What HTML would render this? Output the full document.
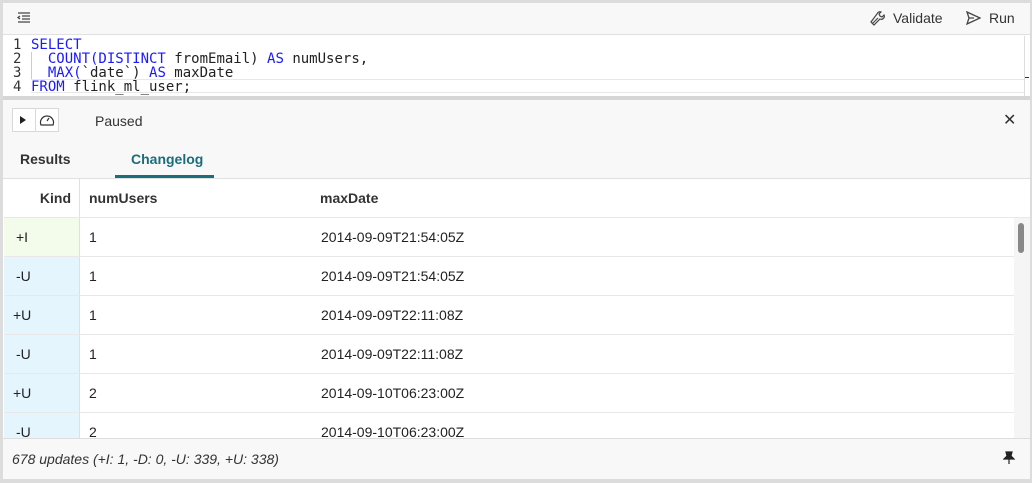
<!DOCTYPE html>
<html><head><style>
*{box-sizing:border-box;margin:0;padding:0}
body{width:1032px;height:483px;background:#fff;font-family:"Liberation Sans",Roboto,sans-serif;position:relative;overflow:hidden;color:#222}
.abs{position:absolute}
.mono{font-family:"DejaVu Sans Mono","Liberation Mono",monospace;font-size:14px;line-height:14px}
.kw{color:#1a1aff}
.row{position:absolute;left:4px;width:1010px;height:39px;border-bottom:1px solid #e8e8e8;font-size:14px}
.row .k{position:absolute;left:0;top:0;width:76px;height:38px;background:#e4f5fd;border-right:1px solid #e0e0e0;padding:11px 0 0 10px}
.row .n{position:absolute;left:85px;top:11px}
.row .d{position:absolute;left:317px;top:11px}
</style></head><body>
<div class="abs" style="left:0;top:0;width:1032px;height:483px;border:3px solid #dcdcdc;border-right:2px solid #dcdcdc;border-bottom:4px solid #dcdcdc"></div>
<div class="abs" style="left:3px;top:3px;width:1027px;height:32px;background:#f8f8f8;border-bottom:1px solid #e0e0e0"></div>
<svg class="abs" style="left:17px;top:12px" width="14" height="12" viewBox="0 0 14 12"><path d="M1 1h12M5 4h8M5 7h8M1 10h12M3 4l-2 1.5 2 1.5" stroke="#444" stroke-width="1.3" fill="none"/></svg>
<svg class="abs" style="left:870px;top:10px" width="16" height="16" viewBox="0 0 16 16"><path d="M2 14l6-6M7 4a3 3 0 0 1 4-2l-2 2 1 2 2 1 2-2a3 3 0 0 1-4 4L4 15 1 12z" stroke="#444" stroke-width="1.2" fill="none"/></svg>
<div class="abs" style="left:893px;top:10px;font-size:14px;color:#333">Validate</div>
<svg class="abs" style="left:966px;top:11px" width="15" height="14" viewBox="0 0 15 14"><path d="M1 1l13 6-13 6 2-6z M3 7h5" stroke="#444" stroke-width="1.3" fill="none"/></svg>
<div class="abs" style="left:989px;top:10px;font-size:14px;color:#333">Run</div>
<div class="abs mono" style="left:13px;top:38px;color:#333">1<br>2<br>3<br>4</div>
<div class="abs" style="left:31px;top:52px;width:1px;height:28px;background:#ccc"></div>
<div class="abs" style="left:31px;top:79px;width:994px;height:14px;border-top:1px solid #e8e8e8;border-bottom:1px solid #e8e8e8"></div>
<div class="abs mono" style="left:31px;top:38px;white-space:pre;color:#222"><span class="kw">SELECT</span>
  <span class="kw">COUNT(DISTINCT</span> fromEmail) <span class="kw">AS</span> numUsers,
  <span class="kw">MAX(</span>`date`) <span class="kw">AS</span> maxDate
<span class="kw">FROM</span> flink_ml_user;</div>
<div class="abs" style="left:1024px;top:36px;width:1px;height:60px;background:#ddd"></div>
<div class="abs" style="left:1025px;top:77px;width:4px;height:1px;background:#333"></div>
<div class="abs" style="left:3px;top:96px;width:1027px;height:4px;background:#d6d6d6"></div>
<div class="abs" style="left:3px;top:100px;width:1027px;height:79px;background:#f8f8f8;border-bottom:1px solid #e0e0e0"></div>
<div class="abs" style="left:12px;top:108px;width:47px;height:24px;border:1px solid #d8d8d8;background:#fff"></div>
<div class="abs" style="left:35px;top:108px;width:1px;height:24px;background:#d8d8d8"></div>
<svg class="abs" style="left:19px;top:115px" width="8" height="10"><path d="M1 1l6 4-6 4z" fill="#222"/></svg>
<svg class="abs" style="left:39px;top:113px" width="16" height="14" viewBox="0 0 16 14"><path d="M2 12a6.5 6.5 0 1 1 12 0z M8 8l2-3" stroke="#333" stroke-width="1.2" fill="none"/></svg>
<div class="abs" style="left:95px;top:113px;font-size:14px;color:#333">Paused</div>
<div class="abs" style="left:1003px;top:110px;font-size:16px;color:#333">✕</div>
<div class="abs" style="left:20px;top:151px;font-size:14px;font-weight:bold;color:#333">Results</div>
<div class="abs" style="left:131px;top:151px;font-size:14px;font-weight:bold;color:#1a6d7a">Changelog</div>
<div class="abs" style="left:115px;top:175px;width:99px;height:3px;background:#1a6d7a"></div>
<div class="abs" style="left:4px;top:179px;width:1026px;height:39px;border-bottom:1px solid #e8e8e8;font-size:14px;font-weight:bold;color:#333">
 <div class="abs" style="left:0;top:0;width:76px;height:38px;border-right:1px solid #e0e0e0;text-align:right;padding:11px 8px 0 0">Kind</div>
 <div class="abs" style="left:85px;top:11px">numUsers</div>
 <div class="abs" style="left:316px;top:11px">maxDate</div>
</div>
<div class="row" style="top:218px"><div class="k" style="background:#f3fceb;padding-left:12px">+I</div><div class="n">1</div><div class="d">2014-09-09T21:54:05Z</div></div>
<div class="row" style="top:257px"><div class="k" style="padding-left:12px">-U</div><div class="n">1</div><div class="d">2014-09-09T21:54:05Z</div></div>
<div class="row" style="top:296px"><div class="k" style="padding-left:9px">+U</div><div class="n">1</div><div class="d">2014-09-09T22:11:08Z</div></div>
<div class="row" style="top:335px"><div class="k" style="padding-left:12px">-U</div><div class="n">1</div><div class="d">2014-09-09T22:11:08Z</div></div>
<div class="row" style="top:374px"><div class="k" style="padding-left:9px">+U</div><div class="n">2</div><div class="d">2014-09-10T06:23:00Z</div></div>
<div class="row" style="top:413px"><div class="k" style="padding-left:12px">-U</div><div class="n">2</div><div class="d">2014-09-10T06:23:00Z</div></div>
<div class="abs" style="left:1014px;top:218px;width:16px;height:220px;background:#f5f5f5"></div>
<div class="abs" style="left:1018px;top:223px;width:6px;height:30px;border-radius:3px;background:#888"></div>
<div class="abs" style="left:3px;top:438px;width:1027px;height:41px;background:#f8f8f8;border-top:1px solid #ddd"></div>
<div class="abs" style="left:12px;top:451px;font-size:14px;font-style:italic;color:#333">678 updates (+I: 1, -D: 0, -U: 339, +U: 338)</div>
<svg class="abs" style="left:1003px;top:451px" width="12" height="14" viewBox="0 0 12 14"><path d="M3 1h6l-1 4 3 3H1l3-3z M6 8v5" stroke="#222" fill="#222" stroke-width="1.2"/></svg>
</body></html>
